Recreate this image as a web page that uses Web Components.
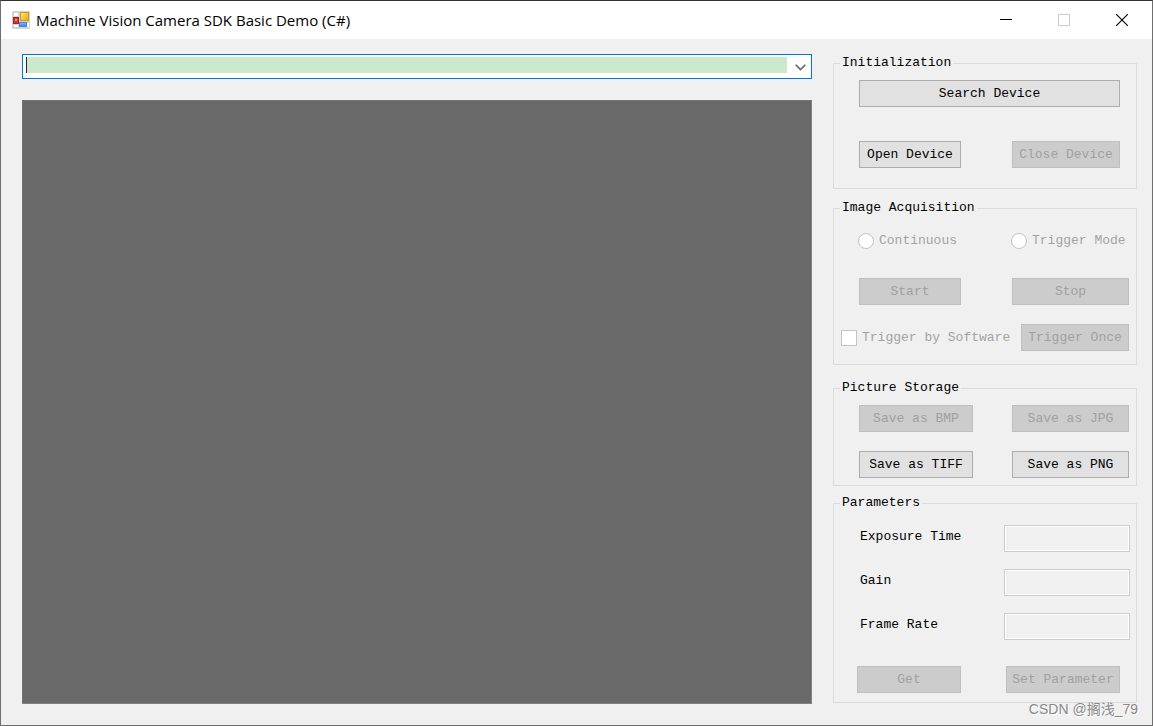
<!DOCTYPE html>
<html lang="en">
<head>
<meta charset="utf-8">
<title>Machine Vision Camera SDK Basic Demo (C#)</title>
<style>
  html, body { margin: 0; height: 100%; }
  body { font: 13px/16px "Liberation Mono", "Noto Sans CJK SC", monospace; color: #000; background: #f0f0f0; }
</style>
</head>
<body>
<camera-demo></camera-demo>
<script>
const define = (name, html, init) => customElements.define(name, class extends HTMLElement {
  connectedCallback() {
    if (this.shadowRoot) return;
    const t = document.createElement('template');
    t.innerHTML = html;
    const root = this.attachShadow({ mode: 'open' });
    root.append(t.content.cloneNode(true));
    if (init) init(this, root);
  }
});

define('title-bar', `
<style>
  :host { display: flex; align-items: center; height: 38px; background: #fff; padding: 0 1px 0 11px; font: 15px/22px "Open Sans", "Noto Sans", sans-serif; }
  h1 { flex: 1; margin: 0 0 0 6px; font: inherit; }
  button { width: 58px; height: 38px; padding: 0; border: 0; background: none; display: grid; place-items: center; }
  svg { display: block; }
</style>
<svg width="18" height="18" viewBox="0 0 18 18" aria-hidden="true">
  <defs>
    <linearGradient id="y" x2="1" y2="1"><stop stop-color="#ffe680"/><stop offset="1" stop-color="#e8a800"/></linearGradient>
    <linearGradient id="b" x2="0" y2="1"><stop stop-color="#8bb8ff"/><stop offset="1" stop-color="#3a78e0"/></linearGradient>
  </defs>
  <rect width="18" height="18" rx="1" fill="#d2d2d2"/>
  <path d="M2 2h4v3H2zM2 14h4v2H2zM15 12h2v4h-2z" fill="#fff"/>
  <rect x="8.500" y="1.500" width="8" height="8" fill="url(#y)" stroke="#c99a1c"/>
  <rect x="1.500" y="6.500" width="5" height="6" fill="#cc3b33" stroke="#a3211c"/>
  <path d="M3 8h2v2H3z" fill="#ea8a80"/>
  <rect x="7.500" y="11.500" width="7" height="4" fill="url(#b)" stroke="#4a82dc"/>
</svg>
<h1><slot></slot></h1>
<button aria-label="Minimize"><svg width="12" height="12" viewBox="0 0 12 12"><path d="M0 5.500h12" stroke="#000"/></svg></button>
<button aria-label="Maximize" disabled><svg width="12" height="12" viewBox="0 0 12 12"><path d="M.5.500h11v11H.5z" fill="none" stroke="#ccc"/></svg></button>
<button aria-label="Close"><svg width="12" height="12" viewBox="0 0 12 12"><path d="M0 0l12 12M12 0L0 12" stroke="#000" stroke-width="1.100"/></svg></button>
`);

define('device-picker', `
<style>
  :host { display: block; position: relative; }
  select { appearance: none; display: block; box-sizing: border-box; width: 100%; height: 25px; margin: 0; padding: 0 28px 0 6px; border: 1px solid #0078d7; border-radius: 0; outline: 0; font: inherit;
    background: linear-gradient(#302030, #302030) 3px 2px / 1px 16px no-repeat,
      linear-gradient(#cae9cd, #cae9cd) 4px 2px / calc(100% - 28px) 16px no-repeat, #fff; }
  svg { position: absolute; right: 6px; top: 10px; pointer-events: none; }
</style>
<select aria-label="Device list"><option></option></select>
<svg width="11" height="7" viewBox="0 0 11 7"><path d="M.7.8l4.800 4.800L10.300.8" fill="none" stroke="#666" stroke-width="1.600"/></svg>
`);

define('group-box', `
<style>
  :host { display: block; }
  fieldset { min-width: 0; margin: 0; padding: 0 0 var(--bottom, 7px); border: 1px solid #dcdcdc; }
  legend { margin-left: 6px; padding: 0 2px; line-height: 16px; }
</style>
<fieldset><legend></legend><slot></slot></fieldset>
`, (host, root) => { root.querySelector('legend').textContent = host.getAttribute('caption'); });

define('form-button', `
<style>
  :host { display: block; }
  button { box-sizing: border-box; display: block; width: 100%; height: 27px; margin: 0; padding: 0; border: 1px solid #adadad; border-radius: 0; background: #e1e1e1; color: #000; font: inherit; white-space: nowrap; }
  button:disabled { border-color: #bfbfbf; background: #ccc; color: #a0a0a0; }
</style>
<button type="button"><slot></slot></button>
`, (host, root) => { root.querySelector('button').disabled = host.hasAttribute('disabled'); });

define('choice-field', `
<style>
  :host { display: flex; align-items: center; height: 20px; color: #a3a3a3; white-space: nowrap; }
  input { appearance: none; box-sizing: border-box; flex: none; width: 16px; height: 16px; margin: 0 5px 0 0; border: 1px solid #c4c4c4; background: #fff; }
  input[type=radio] { border-radius: 50%; }
</style>
<input id="c" disabled><label for="c"><slot></slot></label>
`, (host, root) => { root.querySelector('input').type = host.getAttribute('type'); });

define('value-field', `
<style>
  :host { display: grid; grid-template-columns: 1fr 126px; align-items: start; }
  label { line-height: 24px; }
  input { box-sizing: border-box; width: 100%; height: 27px; margin: 0; padding: 0 4px; border: 1px solid #ccc; border-radius: 0; background: #f0f0f0; box-shadow: inset 0 0 0 1px #fff; font: inherit; }
</style>
<label for="v"><slot></slot></label><input id="v" type="text" disabled>
`);

define('camera-demo', `
<style>
  :host { display: flex; flex-direction: column; box-sizing: border-box; min-height: 100%; position: relative; border: 1px solid #6e6e6e; border-top-color: #333; background: #f0f0f0; }
  main { flex: 1; display: grid; grid-template-columns: 1fr 304px; column-gap: 21px; padding: 15px 15px 21px 21px; }
  .view { display: flex; flex-direction: column; gap: 21px; }
  .preview { flex: 1; border: 1px solid #808080; border-left-color: #737373; border-top-color: #737373; background: #696969; }
  .panel { padding-top: 1px; }
  .row { display: grid; grid-template-columns: 153px 1fr; padding-left: 25px; }
  .init { --bottom: 20px; }
  .acquire { margin-top: 11px; --bottom: 13px; }
  .store { margin-top: 15px; }
  .params { margin-top: 9px; --bottom: 9px; }
  .first { margin-top: 9px; }
  .w102 { width: 102px; } .w104 { width: 104px; } .w108 { width: 108px; } .w114 { width: 114px; } .w117 { width: 117px; }
  .search { margin: 9px 16px 0 25px; }
  .open { margin-top: 34px; }
  .modes { margin-top: 15px; padding-left: 24px; }
  .run { margin-top: 27px; }
  .soft { display: flex; justify-content: space-between; align-items: center; margin-top: 19px; padding: 0 7px; }
  .more { margin-top: 19px; }
  .fields { display: grid; gap: 17px; padding: 14px 6px 0 26px; }
  .apply { display: flex; justify-content: space-between; margin-top: 26px; padding: 0 16px 0 23px; }
  .mark { position: absolute; right: 14px; bottom: 6px; font: 14px/20px "Liberation Sans", "Noto Sans CJK SC", sans-serif; color: #888; text-shadow: 1px 1px 0 #fff; }
</style>
<title-bar>Machine Vision Camera SDK Basic Demo (C#)</title-bar>
<main>
  <section class="view">
    <device-picker></device-picker>
    <div class="preview"></div>
  </section>
  <section class="panel">
    <group-box class="init" caption="Initialization">
      <form-button class="search">Search Device</form-button>
      <div class="row open">
        <form-button class="w102">Open Device</form-button>
        <form-button class="w108" disabled>Close Device</form-button>
      </div>
    </group-box>
    <group-box class="acquire" caption="Image Acquisition">
      <div class="row modes">
        <choice-field type="radio">Continuous</choice-field>
        <choice-field type="radio">Trigger Mode</choice-field>
      </div>
      <div class="row run">
        <form-button class="w102" disabled>Start</form-button>
        <form-button class="w117" disabled>Stop</form-button>
      </div>
      <div class="soft">
        <choice-field type="checkbox">Trigger by Software</choice-field>
        <form-button class="w108" disabled>Trigger Once</form-button>
      </div>
    </group-box>
    <group-box class="store" caption="Picture Storage">
      <div class="row first">
        <form-button class="w114" disabled>Save as BMP</form-button>
        <form-button class="w117" disabled>Save as JPG</form-button>
      </div>
      <div class="row more">
        <form-button class="w114">Save as TIFF</form-button>
        <form-button class="w117">Save as PNG</form-button>
      </div>
    </group-box>
    <group-box class="params" caption="Parameters">
      <div class="fields">
        <value-field>Exposure Time</value-field>
        <value-field>Gain</value-field>
        <value-field>Frame Rate</value-field>
      </div>
      <div class="apply">
        <form-button class="w104" disabled>Get</form-button>
        <form-button class="w114" disabled>Set Parameter</form-button>
      </div>
    </group-box>
  </section>
</main>
<span class="mark">CSDN @搁浅_79</span>
`);
</script>
</body>
</html>
